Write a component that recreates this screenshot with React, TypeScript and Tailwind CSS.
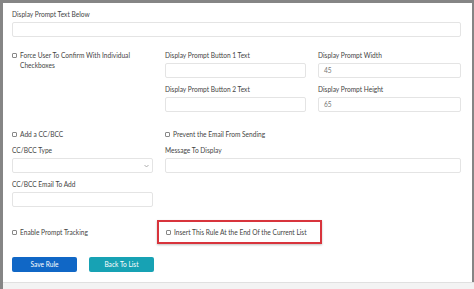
import React from 'react';

const Box = () => (
  <span className="inline-block w-[5px] h-[5px] border border-[#888] rounded-[1px] bg-white shrink-0 mt-[3px]" />
);

const Check = ({ label }: { label: string }) => (
  <div className="flex items-start gap-[3px] leading-[10px]">
    <Box />
    <span>{label}</span>
  </div>
);

const Field = ({ label, value, className = '' }: { label: string; value?: string; className?: string }) => (
  <div className={className}>
    <div className="leading-[10px] mb-[3px]">{label}</div>
    <div className="h-[15px] border border-[#e4e4e4] rounded-[2px] bg-white px-[5px] leading-[13px] text-[#777]">
      {value}
    </div>
  </div>
);

export default function App() {
  return (
    <div
      className="w-[474px] h-[289px] bg-[#858585] pt-[3px] pl-[3px] pr-[2px] overflow-hidden text-[#444] text-[6.6px]"
      style={{ fontFamily: 'Lato, "Open Sans", sans-serif' }}
    >
      <div className="bg-white h-[279px] pl-[9px] pr-[11px] pt-[6px]">
        {/* Prompt text */}
        <Field label="Display Prompt Text Below" />

        {/* Prompt options */}
        <div className="grid grid-cols-[141px_141px_143px] gap-x-[12px] mt-[13px]">
          <div className="pr-[10px]">
            <Check label="Force User To Confirm With Individual Checkboxes" />
          </div>
          <div className="flex flex-col gap-[6px]">
            <Field label="Display Prompt Button 1 Text" />
            <Field label="Display Prompt Button 2 Text" />
          </div>
          <div className="flex flex-col gap-[6px]">
            <Field label="Display Prompt Width" value="45" />
            <Field label="Display Prompt Height" value="65" />
          </div>
        </div>

        {/* CC / BCC */}
        <div className="grid grid-cols-[141px_296px] gap-x-[12px] mt-[17px]">
          <Check label="Add a CC/BCC" />
          <Check label="Prevent the Email From Sending" />
          <div className="mt-[6px]">
            <div className="leading-[10px] mb-[3px]">CC/BCC Type</div>
            <div className="h-[15px] border border-[#e4e4e4] rounded-[2px] bg-white flex items-center justify-end pr-[3px]">
              <svg width="5" height="4" viewBox="0 0 5 4">
                <path d="M0.5 1 L2.5 3 L4.5 1" fill="none" stroke="#999" strokeWidth="0.8" />
              </svg>
            </div>
          </div>
          <Field label="Message To Display" className="mt-[6px]" />
          <Field label="CC/BCC Email To Add" className="mt-[6px]" />
          <div />
        </div>

        {/* Tracking / insert */}
        <div className="grid grid-cols-[141px_165px] gap-x-[4px] mt-[13px] items-center">
          <Check label="Enable Prompt Tracking" />
          <div className="h-[24px] border-2 border-[#d8343c] flex items-center pl-[7px] shadow-[0_1px_2px_rgba(0,0,0,0.25)]">
            <Check label="Insert This Rule At the End Of the Current List" />
          </div>
        </div>

        {/* Buttons */}
        <div className="flex gap-[12px] mt-[13px]">
          <button className="w-[65px] h-[15px] bg-[#1067c6] text-white rounded-[2px] leading-[15px]">Save Rule</button>
          <button className="w-[65px] h-[15px] bg-[#17a2b4] text-white rounded-[2px] leading-[15px]">Back To List</button>
        </div>
      </div>
      <div className="h-[7px] bg-[#f3f3f3] border-t border-[#e0e0e0] -mr-[2px]" />
    </div>
  );
}
